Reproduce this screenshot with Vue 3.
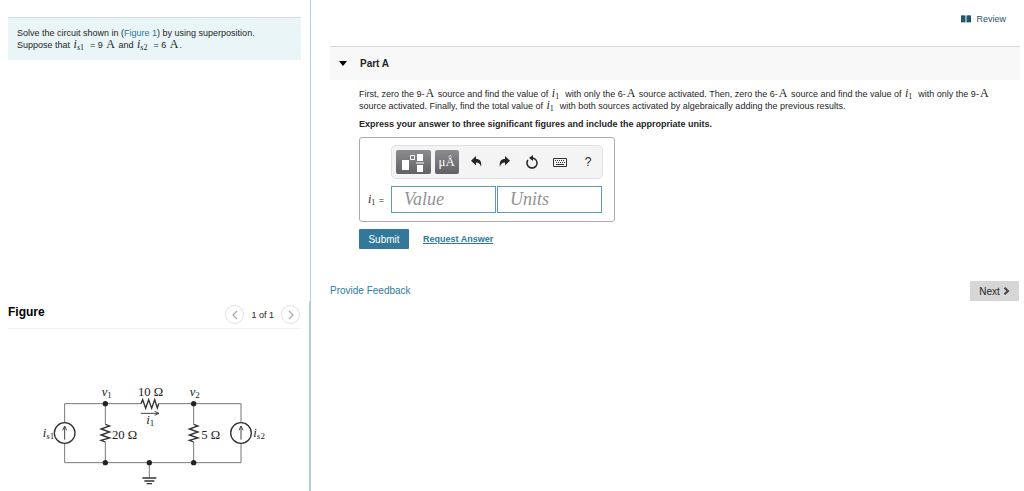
<template>
  <div class="page">
    <aside class="side">
      <section class="side-top">
        <p class="intro">
          Solve the circuit shown in (<a href="#figure">Figure 1</a>) by using superposition.
          <br />
          Suppose that <span class="math"><i>i</i><sub><i>s</i>1</sub></span>&nbsp; = 9 <span class="math">A</span> and
          <span class="math"><i>i</i><sub><i>s</i>2</sub></span>&nbsp; = 6 <span class="math">A</span>.
        </p>
      </section>

      <section id="figure" class="side-figure">
        <header class="figure-head">
          <h2>Figure</h2>
          <nav class="pager">
            <button type="button" class="round" aria-label="Previous figure" @click="prev">
              <svg width="8" height="10" viewBox="0 0 8 10"><path d="M6 1 2 5l4 4" /></svg>
            </button>
            <span>{{ current }} of {{ total }}</span>
            <button type="button" class="round" aria-label="Next figure" @click="next">
              <svg width="8" height="10" viewBox="0 0 8 10"><path d="M2 1l4 4-4 4" /></svg>
            </button>
          </nav>
        </header>

        <svg class="circuit" width="250" height="116" viewBox="0 0 750 348" role="img" aria-label="Circuit diagram">
          <!-- wires -->
          <g class="wire">
            <path d="M104 142V86H333M386 86H633V142M104 206V263H633V206" />
            <path d="M226 86V148M226 201V263M491 86V148M491 201V263M358 263V307" />
          </g>
          <!-- resistors -->
          <g class="part">
            <path d="M333 86l5-12 9 26 9-26 9 26 9-26 8 25 4-13" />
            <path d="M226 148l13 5-26 9 26 9-26 9 26 9-26 7 13 5" />
            <path d="M491 148l13 5-26 9 26 9-26 9 26 9-26 7 13 5" />
          </g>
          <!-- current sources -->
          <g class="part">
            <circle cx="104" cy="174" r="31" />
            <circle cx="633" cy="174" r="31" />
          </g>
          <g class="arrow">
            <path d="M104 194V154M98 166l6-13 6 13" />
            <path d="M633 194V154M627 166l6-13 6 13" />
            <path d="M332 115H387M374 109l13 6-13 6" />
          </g>
          <g class="part">
            <path d="M337 309H379M343 318H373M350 326H366" />
          </g>
          <g class="dots">
            <circle v-for="(d, i) in dots" :key="i" :cx="d[0]" :cy="d[1]" r="8" />
          </g>
          <g class="labels">
            <text x="215" y="63"><tspan class="it">v</tspan><tspan class="small" dy="6">1</tspan></text>
            <text x="479" y="63"><tspan class="it">v</tspan><tspan class="small" dy="6">2</tspan></text>
            <text x="324" y="63">10 Ω</text>
            <text x="246" y="192">20 Ω</text>
            <text x="514" y="192">5 Ω</text>
            <text x="349" y="146"><tspan class="it">i</tspan><tspan class="small" dy="6">1</tspan></text>
            <text x="38" y="186"><tspan class="it">i</tspan><tspan class="small it" dy="6">s</tspan><tspan class="small">1</tspan></text>
            <text x="670" y="186"><tspan class="it">i</tspan><tspan class="small it" dy="6">s</tspan><tspan class="small">2</tspan></text>
          </g>
        </svg>
      </section>
    </aside>

    <main class="main">
      <div class="review">
        <a href="#review">
          <svg width="10" height="8" viewBox="0 0 10 8">
            <path d="M0 .5Q2 0 4.500 .6V7.600Q2 6.800 0 7.400ZM5.500 .6Q8 0 10 .5V7.400Q8 6.800 5.500 7.600Z" />
          </svg>
          Review
        </a>
      </div>

      <button type="button" class="part-head" :aria-expanded="open" @click="open = !open">
        <svg width="8" height="5" viewBox="0 0 8 5"><path d="M0 0H8L4 5Z" /></svg>
        <span>Part A</span>
      </button>

      <form v-if="open" class="part-body" @submit.prevent>
        <p>
          First, zero the 9-<span class="math">A</span> source and find the value of
          <span class="math"><i>i</i><sub>1</sub></span>&nbsp; with only the 6-<span class="math">A</span> source
          activated. Then, zero the 6-<span class="math">A</span> source and find the value of
          <span class="math"><i>i</i><sub>1</sub></span>&nbsp; with only the 9-<span class="math">A</span>
          source activated. Finally, find the total value of
          <span class="math"><i>i</i><sub>1</sub></span>&nbsp; with both sources activated by algebraically adding the
          previous results.
        </p>
        <p class="express">Express your answer to three significant figures and include the appropriate units.</p>

        <div class="answer">
          <div class="toolbar">
            <button type="button" class="dark wide" aria-label="Templates">
              <svg width="23" height="19" viewBox="0 0 23 19">
                <path class="fill" d="M0 7H7V17H0ZM15 1H21V8H15ZM15 12H21V19H15Z" />
                <path class="fill" d="M14 9.500H22V10.500H14Z" />
                <path class="box" d="M8.500 2.500H12.500V6.500H8.500Z" />
              </svg>
            </button>
            <button type="button" class="dark" aria-label="Symbols">μÅ</button>
            <button type="button" class="tool" aria-label="Undo">
              <svg width="12" height="12" viewBox="0 0 12 12">
                <path class="ink" d="M5 0V3C9 3 11 5.500 10 11C9.500 8 8 6.500 5 6.500V9.500L0 4.700Z" />
              </svg>
            </button>
            <button type="button" class="tool" aria-label="Redo">
              <svg width="12" height="12" viewBox="0 0 12 12">
                <path class="ink" d="M7 0V3C3 3 1 5.500 2 11C2.500 8 4 6.500 7 6.500V9.500L12 4.700Z" />
              </svg>
            </button>
            <button type="button" class="tool" aria-label="Reset">
              <svg width="12" height="14" viewBox="0 0 12 14">
                <path class="line" d="M6 3A5 5 0 1 1 2 5" />
                <path class="ink" d="M7 0V6L3 3Z" />
              </svg>
            </button>
            <button type="button" class="tool" aria-label="Keyboard shortcuts">
              <svg width="14" height="9" viewBox="0 0 14 9">
                <path class="thin" d="M.5 .5H13.500V8.500H.5Z" />
                <path class="keys" d="M2 2.500H12M3 4.500H12" />
                <path class="thin" d="M3 6.500H11" />
              </svg>
            </button>
            <button type="button" class="tool help" aria-label="Help">?</button>
          </div>
          <label class="symbol" for="value"><span class="math"><i>i</i><sub>1</sub></span> =</label>
          <div class="fields">
            <input id="value" v-model="value" type="text" placeholder="Value" />
            <input v-model="units" type="text" placeholder="Units" aria-label="Units" />
          </div>
        </div>

        <div class="actions">
          <button type="submit" class="submit">Submit</button>
          <a href="#answer">Request Answer</a>
        </div>
      </form>

      <footer class="foot">
        <a href="#feedback">Provide Feedback</a>
        <button type="button" class="next">
          Next
          <svg width="7" height="8" viewBox="0 0 7 8"><path d="M1.500 .7 5 4 1.500 7.300" /></svg>
        </button>
      </footer>
    </main>
  </div>
</template>

<script setup>
import { ref } from 'vue'

const value = ref('')
const units = ref('')
const open = ref(true)

const current = ref(1)
const total = 1

const dots = [
  [226, 86],
  [491, 86],
  [226, 263],
  [358, 263],
  [491, 263]
]

const prev = () => {
  if (current.value > 1) current.value--
}

const next = () => {
  if (current.value < total) current.value++
}
</script>

<style>
body {
  margin: 0;
  background: #fff;
}
</style>

<style scoped>
.page {
  display: grid;
  grid-template-columns: 311px 1fr;
  min-height: 100vh;
  font-family: "Liberation Sans", Arial, sans-serif;
  font-size: 10px;
  line-height: 12px;
  color: #252525;
}

.page * {
  box-sizing: border-box;
}

a {
  color: #2f7a9b;
  text-decoration: none;
}

p,
h2 {
  margin: 0;
}

p {
  font-size: 9px;
}

button {
  font-family: inherit;
  border: none;
  padding: 0;
  cursor: pointer;
}

.math {
  margin: 0 1px;
  font-family: "Liberation Serif", "Times New Roman", serif;
  font-size: 12px;
  line-height: 10px;
}

.math sub {
  font-size: 8px;
  line-height: 0;
  vertical-align: -2px;
}

/* left column */
.side {
  display: flex;
  flex-direction: column;
}

.side-top {
  height: 301px;
  padding: 17px 9px 0 8px;
  border-right: 1px solid #b9cddd;
}

.intro {
  padding: 9px;
  border-top: 1px solid #d5dfe2;
  background: #e9f5f7;
}

.side-figure {
  flex: 1;
  padding: 0 9px 0 8px;
  border-right: 2px solid #b9cddd;
}

.figure-head {
  display: flex;
  justify-content: space-between;
  height: 28px;
  border-bottom: 1px solid #f2f2f2;
}

.figure-head h2 {
  padding-top: 4px;
  font-size: 12px;
  line-height: 14px;
  color: #000;
}

.pager {
  display: flex;
  align-items: center;
  gap: 7px;
  font-size: 9px;
}

.round {
  display: flex;
  align-items: center;
  justify-content: center;
  width: 19px;
  height: 19px;
  border: 1px solid #e2e2e2;
  border-radius: 50%;
  background: #fff;
}

.round path {
  fill: none;
  stroke: #aaa;
  stroke-width: 1.2;
}

.circuit {
  display: block;
  margin: 46px 0 0 22px;
}

.wire {
  fill: none;
  stroke: #777;
  stroke-width: 3;
}

.part {
  fill: none;
  stroke: #333;
  stroke-width: 4;
}

.arrow {
  fill: none;
  stroke: #444;
  stroke-width: 3;
}

.dots {
  fill: #222;
}

.labels {
  fill: #222;
  font-family: "Liberation Serif", "Times New Roman", serif;
  font-size: 38px;
}

.it {
  font-style: italic;
}

.small {
  font-size: 27px;
}

/* right column */
.main {
  padding: 0 4px 0 19px;
}

.review {
  display: flex;
  justify-content: flex-end;
  height: 46px;
  padding: 12px 14px 0 0;
}

.review a {
  display: flex;
  align-items: center;
  gap: 5px;
  height: 14px;
  font-size: 9px;
  color: #1f566b;
}

.review path {
  fill: #1f566b;
}

.part-head {
  display: flex;
  align-items: center;
  gap: 13px;
  width: 100%;
  height: 34px;
  padding-left: 9px;
  border-top: 1px solid #d8d8d8;
  background: #f8f8f8;
  font-size: 10px;
  font-weight: bold;
  color: #252525;
}

.part-body {
  padding: 8px 16px 0 29px;
}

.express {
  margin-top: 6px;
  font-weight: bold;
}

.answer {
  display: grid;
  grid-template-columns: 24px 212px;
  gap: 7px 0;
  align-items: center;
  justify-content: start;
  width: 256px;
  margin-top: 7px;
  padding: 7px 7px 8px;
  border: 1px solid #aaa;
  border-radius: 3px;
}

.toolbar {
  grid-column: 2;
  display: flex;
  align-items: center;
  height: 34px;
  padding-left: 4px;
  border: 1px solid #e0e0e0;
  border-radius: 5px;
  background: #f4f4f4;
}

.dark {
  display: flex;
  align-items: center;
  justify-content: center;
  width: 24px;
  height: 24px;
  margin-right: 4px;
  border-radius: 2px;
  background: linear-gradient(#8b8b90, #626266);
  font-family: "Liberation Serif", "Times New Roman", serif;
  font-size: 13px;
  color: #fff;
}

.wide {
  width: 35px;
}

.dark .fill {
  fill: #fff;
}

.dark .box {
  fill: none;
  stroke: #fff;
}

.tool {
  display: flex;
  align-items: center;
  justify-content: center;
  width: 28px;
  height: 24px;
  background: none;
  color: #252525;
}

.ink {
  fill: #252525;
}

.line {
  fill: none;
  stroke: #252525;
  stroke-width: 1.5;
}

.thin {
  fill: none;
  stroke: #333;
}

.keys {
  fill: none;
  stroke: #333;
  stroke-dasharray: 1 1;
}

.help {
  font-size: 12px;
}

.symbol {
  font-size: 9px;
  white-space: nowrap;
}

.fields {
  display: grid;
  grid-template-columns: 1fr 1fr;
  gap: 1px;
  padding-right: 1px;
}

.fields input {
  width: 100%;
  height: 27px;
  padding: 0 12px;
  border: 1px solid #5b9ab8;
  border-radius: 0;
  background: #fff;
  font-family: "Liberation Serif", "Times New Roman", serif;
  font-size: 18px;
}

.fields input::placeholder {
  font-style: italic;
  color: #929292;
  opacity: 1;
}

.actions {
  display: flex;
  align-items: center;
  gap: 14px;
  margin-top: 7px;
}

.submit {
  width: 50px;
  height: 20px;
  border-radius: 1px;
  background: #32789a;
  font-size: 10px;
  color: #fff;
}

.actions a {
  font-size: 9px;
  font-weight: bold;
  text-decoration: underline;
}

.foot {
  display: flex;
  align-items: center;
  justify-content: space-between;
  margin-top: 32px;
  padding-right: 1px;
}

.next {
  display: flex;
  align-items: center;
  justify-content: center;
  gap: 3px;
  width: 49px;
  height: 20px;
  border-radius: 1px;
  background: #d6d6d6;
  font-size: 10px;
  color: #252525;
}

.next path {
  fill: none;
  stroke: #444;
  stroke-width: 2;
}
</style>
